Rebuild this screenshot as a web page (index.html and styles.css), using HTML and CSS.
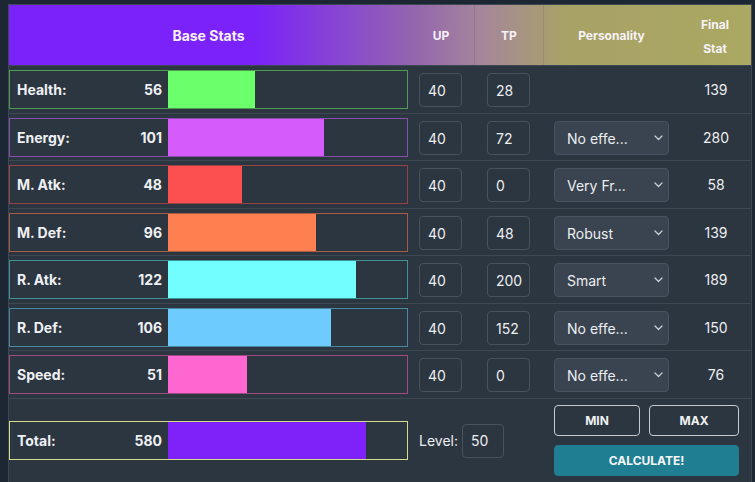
FILE: index.html
```html
<!DOCTYPE html>
<html lang="en">
<head>
<meta charset="utf-8">
<title>Stat Calculator</title>
<link rel="stylesheet" href="styles.css">
</head>
<body>
<div class="calc">
  <div class="head">
    <div class="hcell hbase">Base Stats</div>
    <div class="hcell">UP</div>
    <div class="hcell hdiv">TP</div>
    <div class="hcell hdiv">Personality</div>
    <div class="hcell hfinal">Final Stat</div>
  </div>

  <div class="row tall">
    <div class="stat health"><span class="lbl">Health:</span><span class="num">56</span><span class="track"><span class="fill" style="width:87px"></span></span></div>
    <div class="cell up"><span class="inp">40</span></div>
    <div class="cell tp"><span class="inp">28</span></div>
    <div class="cell pers"></div>
    <div class="cell fin">139</div>
  </div>

  <div class="row">
    <div class="stat energy"><span class="lbl">Energy:</span><span class="num">101</span><span class="track"><span class="fill" style="width:156px"></span></span></div>
    <div class="cell up"><span class="inp">40</span></div>
    <div class="cell tp"><span class="inp">72</span></div>
    <div class="cell pers"><span class="sel"><span class="seltxt">No effe...</span><svg class="chev" width="9" height="6" viewBox="0 0 9 6"><path d="M1 1l3.5 3.5L8 1" fill="none" stroke="#c9ced3" stroke-width="1.3" stroke-linecap="round" stroke-linejoin="round"/></svg></span></div>
    <div class="cell fin">280</div>
  </div>

  <div class="row tall">
    <div class="stat matk"><span class="lbl">M. Atk:</span><span class="num">48</span><span class="track"><span class="fill" style="width:74px"></span></span></div>
    <div class="cell up"><span class="inp">40</span></div>
    <div class="cell tp"><span class="inp">0</span></div>
    <div class="cell pers"><span class="sel"><span class="seltxt">Very Fr...</span><svg class="chev" width="9" height="6" viewBox="0 0 9 6"><path d="M1 1l3.5 3.5L8 1" fill="none" stroke="#c9ced3" stroke-width="1.3" stroke-linecap="round" stroke-linejoin="round"/></svg></span></div>
    <div class="cell fin">58</div>
  </div>

  <div class="row">
    <div class="stat mdef"><span class="lbl">M. Def:</span><span class="num">96</span><span class="track"><span class="fill" style="width:148px"></span></span></div>
    <div class="cell up"><span class="inp">40</span></div>
    <div class="cell tp"><span class="inp">48</span></div>
    <div class="cell pers"><span class="sel"><span class="seltxt">Robust</span><svg class="chev" width="9" height="6" viewBox="0 0 9 6"><path d="M1 1l3.5 3.5L8 1" fill="none" stroke="#c9ced3" stroke-width="1.3" stroke-linecap="round" stroke-linejoin="round"/></svg></span></div>
    <div class="cell fin">139</div>
  </div>

  <div class="row tall">
    <div class="stat ratk"><span class="lbl">R. Atk:</span><span class="num">122</span><span class="track"><span class="fill" style="width:188px"></span></span></div>
    <div class="cell up"><span class="inp">40</span></div>
    <div class="cell tp"><span class="inp">200</span></div>
    <div class="cell pers"><span class="sel"><span class="seltxt">Smart</span><svg class="chev" width="9" height="6" viewBox="0 0 9 6"><path d="M1 1l3.5 3.5L8 1" fill="none" stroke="#c9ced3" stroke-width="1.3" stroke-linecap="round" stroke-linejoin="round"/></svg></span></div>
    <div class="cell fin">189</div>
  </div>

  <div class="row">
    <div class="stat rdef"><span class="lbl">R. Def:</span><span class="num">106</span><span class="track"><span class="fill" style="width:163px"></span></span></div>
    <div class="cell up"><span class="inp">40</span></div>
    <div class="cell tp"><span class="inp">152</span></div>
    <div class="cell pers"><span class="sel"><span class="seltxt">No effe...</span><svg class="chev" width="9" height="6" viewBox="0 0 9 6"><path d="M1 1l3.5 3.5L8 1" fill="none" stroke="#c9ced3" stroke-width="1.3" stroke-linecap="round" stroke-linejoin="round"/></svg></span></div>
    <div class="cell fin">150</div>
  </div>

  <div class="row tall">
    <div class="stat speed"><span class="lbl">Speed:</span><span class="num">51</span><span class="track"><span class="fill" style="width:79px"></span></span></div>
    <div class="cell up"><span class="inp">40</span></div>
    <div class="cell tp"><span class="inp">0</span></div>
    <div class="cell pers"><span class="sel"><span class="seltxt">No effe...</span><svg class="chev" width="9" height="6" viewBox="0 0 9 6"><path d="M1 1l3.5 3.5L8 1" fill="none" stroke="#c9ced3" stroke-width="1.3" stroke-linecap="round" stroke-linejoin="round"/></svg></span></div>
    <div class="cell fin">76</div>
  </div>

  <div class="foot">
    <div class="stat total"><span class="lbl">Total:</span><span class="num">580</span><span class="track"><span class="fill" style="width:198px"></span></span></div>
    <div class="level"><span class="levlbl">Level:</span><span class="inp levinp">50</span></div>
    <div class="btns">
      <button class="btn">MIN</button>
      <button class="btn">MAX</button>
      <button class="btn calc-btn">CALCULATE!</button>
    </div>
  </div>
</div>
</body>
</html>
```

FILE: styles.css
```css
* { box-sizing: border-box; }
html, body { margin: 0; padding: 0; }
body {
  background: #1c2733;
  padding: 4px 0 0 8px;
  font-family: Inter, "Liberation Sans", sans-serif;
  color: #e9ebee;
  height: 482px;
  overflow: hidden;
}
.calc {
  width: 744px;
  background: #2c3641;
  border: 1px solid #3d4853;
  border-bottom: none;
  min-height: 480px;
}
.head {
  display: grid;
  grid-template-columns: 399px 66px 69px 136px 72px;
  height: 61px;
  background: linear-gradient(90deg, #7b22fa 0%, #7b22fa 33%, #9467ad 55%, #a5879a 64%, #a8a266 75%, #aaa862 100%);
  border-bottom: 1px solid #3d4853;
}
.hcell {
  display: flex;
  align-items: center;
  justify-content: center;
  text-align: center;
  font-weight: 700;
  font-size: 12px;
  color: #f6f2f8;
}
.hbase { font-size: 14px; }
.hdiv { border-left: 1px solid rgba(90, 80, 110, 0.22); }
.hfinal { line-height: 24px; padding: 3px 18px 0; }

.row {
  display: grid;
  grid-template-columns: 399px 66px 69px 136px 72px;
  align-items: start;
  height: 47px;
  padding-top: 4px;
  border-bottom: 1px solid #3d4853;
}
.row.tall { height: 48px; }
.stat {
  display: flex;
  align-items: stretch;
  height: 39px;
  border: 1px solid #555;
}
.lbl {
  width: 110px;
  padding-left: 7px;
  display: flex;
  align-items: center;
  font-weight: 700;
  font-size: 14px;
  color: #eef0f2;
}
.num {
  width: 48px;
  padding-right: 6px;
  display: flex;
  align-items: center;
  justify-content: flex-end;
  font-weight: 700;
  font-size: 14px;
  color: #eef0f2;
}
.track { flex: 1; display: flex; }
.fill { display: block; height: 100%; }

.health { border-color: #4f9b52; }
.health .fill { background: #6cff6c; }
.energy { border-color: #8a4fae; }
.energy .fill { background: #d55bfb; }
.matk { border-color: #9a4243; }
.matk .fill { background: #fc4f50; }
.mdef { border-color: #a65c44; }
.mdef .fill { background: #fe8050; }
.ratk { border-color: #3e9394; }
.ratk .fill { background: #72fefe; }
.rdef { border-color: #4a87a3; }
.rdef .fill { background: #6dcbfe; }
.speed { border-color: #a04b80; }
.speed .fill { background: #fd67cf; }
.total { border-color: #d6db8e; }
.total .fill { background: #7f22fa; }

.cell { display: flex; align-items: center; height: 40px; }
.up { padding-left: 11px; }
.tp { padding-left: 13px; }
.pers { padding-left: 11px; }
.fin { justify-content: center; font-size: 14px; padding-left: 2px; padding-bottom: 1px; color: #eceef0; }

.inp {
  display: flex;
  align-items: center;
  width: 43px;
  height: 34px;
  padding-left: 8px;
  border: 1px solid #47525d;
  border-radius: 4px;
  font-size: 14px;
  color: #eceef0;
}
.sel {
  display: flex;
  align-items: center;
  width: 115px;
  height: 34px;
  padding: 0 5px 0 12px;
  background: #394450;
  border: 1px solid #48535f;
  border-radius: 4px;
  font-size: 14px;
  color: #eceef0;
}
.seltxt { white-space: nowrap; }
.chev { margin-left: auto; }

.foot {
  display: grid;
  grid-template-columns: 399px 146px 197px;
  align-items: center;
  padding: 6px 0 8px;
}
.level {
  display: flex;
  align-items: center;
  padding-left: 11px;
  gap: 4px;
  font-size: 14px;
  color: #eceef0;
}
.levinp { width: 42px; height: 34px; }
.btns {
  display: grid;
  grid-template-columns: 86px 90px;
  gap: 9px;
}
.btn {
  height: 31px;
  font-family: Inter, "Liberation Sans", sans-serif;
  font-weight: 700;
  font-size: 12px;
  color: #eef0f2;
  background: #2c3641;
  border: 1px solid #c6cace;
  border-radius: 4px;
  padding: 0;
}
.calc-btn {
  grid-column: 1 / span 2;
  background: #1f7e91;
  border-color: #1f7e91;
  color: #f4f6f8;
}
```
